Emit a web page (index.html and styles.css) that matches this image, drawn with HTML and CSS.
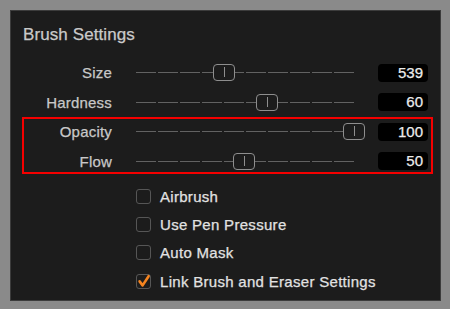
FILE: index.html
```html
<!DOCTYPE html>
<html>
<head>
<meta charset="utf-8">
<link rel="stylesheet" href="styles.css">
</head>
<body>
<div class="panel">
  <div class="title">Brush Settings</div>
  <div class="rows">
    <div class="row">
      <div class="label">Size</div>
      <div class="track"><div class="thumb" style="left:77px"></div></div>
      <div class="value">539</div>
    </div>
    <div class="row">
      <div class="label">Hardness</div>
      <div class="track"><div class="thumb" style="left:120px"></div></div>
      <div class="value">60</div>
    </div>
    <div class="highlight">
      <div class="row">
        <div class="label">Opacity</div>
        <div class="track"><div class="thumb" style="left:207px"></div></div>
        <div class="value">100</div>
      </div>
      <div class="row">
        <div class="label">Flow</div>
        <div class="track"><div class="thumb" style="left:97px"></div></div>
        <div class="value">50</div>
      </div>
    </div>
  </div>
  <div class="checks">
    <div class="check"><span class="box"></span><span class="ctext">Airbrush</span></div>
    <div class="check"><span class="box"></span><span class="ctext">Use Pen Pressure</span></div>
    <div class="check"><span class="box"></span><span class="ctext">Auto Mask</span></div>
    <div class="check"><span class="box checked"><svg viewBox="0 0 16 16" width="16" height="16"><path d="M3.6 8.4 L6.6 12.4 L12.6 3.2" fill="none" stroke="#f5841f" stroke-width="2.6" stroke-linecap="round" stroke-linejoin="round"/></svg></span><span class="ctext">Link Brush and Eraser Settings</span></div>
  </div>
</div>
</body>
</html>
```
FILE: styles.css
```css
html, body {
  margin: 0;
  padding: 0;
}
body {
  background: #8a8a8a;
  width: 450px;
  height: 309px;
  overflow: hidden;
  font-family: "Liberation Sans", Arial, sans-serif;
  -webkit-text-stroke: 0.25px currentColor;
}
.panel {
  margin: 10px 0 0 10px;
  width: 429px;
  height: 289px;
  border: 1px solid #3c3c3c;
  background: #1c1c1c;
  box-sizing: content-box;
}
.title {
  color: #cacaca;
  font-size: 17px;
  line-height: 20px;
  padding: 14px 0 0 12px;
  letter-spacing: 0.1px;
}
.rows {
  margin-top: 13px;
}
.row {
  display: flex;
  align-items: center;
  height: 29.5px;
}
.label {
  width: 101px;
  text-align: right;
  color: #c8c8c8;
  font-size: 15px;
  letter-spacing: 0.2px;
}
.track {
  position: relative;
  margin-left: 24px;
  width: 220px;
  height: 1px;
  background: repeating-linear-gradient(to right, #626262 0, #626262 20px, transparent 20px, transparent 22px);
}
.thumb {
  position: absolute;
  top: -8px;
  width: 22px;
  height: 17px;
  box-sizing: border-box;
  border: 1.5px solid #8e8e8e;
  border-radius: 4px;
  background: #1c1c1c;
}
.thumb::after {
  content: "";
  position: absolute;
  left: 9.5px;
  top: 2px;
  width: 1px;
  height: 10px;
  background: #8e8e8e;
}
.value {
  margin-left: 22px;
  width: 50px;
  height: 18px;
  box-sizing: border-box;
  background: #000;
  border-radius: 4px;
  color: #ececec;
  font-size: 15px;
  line-height: 18px;
  text-align: right;
  padding-right: 5px;
}
.highlight {
  position: relative;
}
.highlight::after {
  content: "";
  position: absolute;
  left: 11px;
  top: -0.5px;
  width: 411px;
  height: 57px;
  box-sizing: border-box;
  border: 2px solid #f50000;
  pointer-events: none;
}
.checks {
  margin-top: 6px;
  margin-left: 125px;
}
.check {
  display: flex;
  align-items: center;
  height: 28.3px;
}
.box {
  display: block;
  width: 15px;
  height: 15px;
  box-sizing: border-box;
  border: 1.5px solid #565656;
  border-radius: 3px;
  position: relative;
}
.box svg {
  position: absolute;
  left: -1px;
  top: -1.5px;
}
.ctext {
  margin-left: 9px;
  color: #e2e2e2;
  font-size: 15px;
  letter-spacing: 0.3px;
}
```
